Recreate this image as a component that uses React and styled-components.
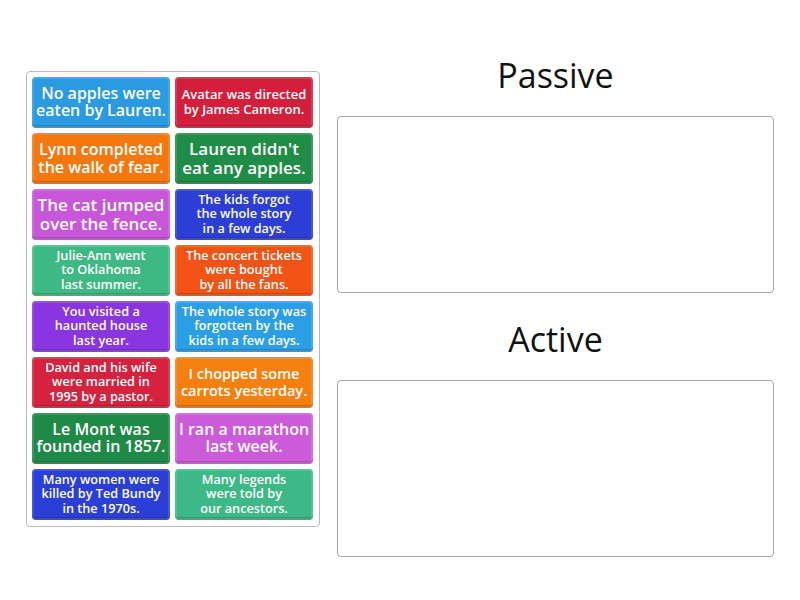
import React from 'react'
import styled, { createGlobalStyle } from 'styled-components'

const GlobalStyle = createGlobalStyle`
  html, body {
    margin: 0;
    padding: 0;
    background: #fff;
  }
  body {
    font-family: "Open Sans", "Liberation Sans", sans-serif;
  }
`

const Page = styled.div`
  display: flex;
  align-items: flex-start;
  width: 800px;
  height: 600px;
  box-sizing: border-box;
  padding: 30px 0 0 26px;
`

const Tray = styled.div`
  margin-top: 41px;
  width: 294px;
  box-sizing: border-box;
  border: 1px solid #b9b9b9;
  border-radius: 4px;
  padding: 5px 6px 6px 5px;
  display: grid;
  grid-template-columns: 138px 138px;
  grid-auto-rows: 51px;
  column-gap: 5px;
  row-gap: 5px;
`

const Card = styled.div`
  display: flex;
  align-items: center;
  justify-content: center;
  background: ${p => p.bg};
  border-radius: 4px;
  box-shadow: inset 0 0 0 2px rgba(255, 255, 255, 0.13),
    inset 0 -3px 0 rgba(0, 0, 0, 0.16);
  color: #fff;
  font-weight: 600;
  font-size: ${p => p.size}px;
  line-height: ${p => p.lh}px;
  text-align: center;
  white-space: nowrap;
  padding-bottom: 2px;
  box-sizing: border-box;
  overflow: hidden;
`

const Zones = styled.div`
  margin-left: 17px;
  width: 437px;
  display: flex;
  flex-direction: column;
`

const ZoneTitle = styled.div`
  font-size: 34px;
  line-height: 46px;
  color: #111;
  text-align: center;
  margin-top: ${p => p.top}px;
  margin-bottom: 18px;
`

const Drop = styled.div`
  height: 177px;
  box-sizing: border-box;
  border: 1px solid #a8a8a8;
  border-radius: 4px;
  background: #fff;
`

const cards = [
  { bg: '#2a9be2', size: 16, lh: 17, lines: ['No apples were', 'eaten by Lauren.'] },
  { bg: '#d41f3c', size: 13, lh: 15, lines: ['Avatar was directed', 'by James Cameron.'] },
  { bg: '#f5780f', size: 16, lh: 18, lines: ['Lynn completed', 'the walk of fear.'] },
  { bg: '#1f8c48', size: 17, lh: 19, lines: ["Lauren didn't", 'eat any apples.'] },
  { bg: '#c756d8', size: 17, lh: 19, lines: ['The cat jumped', 'over the fence.'] },
  { bg: '#2c3ed6', size: 12.7, lh: 14.5, lines: ['The kids forgot', 'the whole story', 'in a few days.'] },
  { bg: '#3eb984', size: 12.7, lh: 14.5, lines: ['Julie-Ann went', 'to Oklahoma', 'last summer.'] },
  { bg: '#f35314', size: 12.7, lh: 14.5, lines: ['The concert tickets', 'were bought', 'by all the fans.'] },
  { bg: '#8a35e2', size: 12.7, lh: 14.5, lines: ['You visited a', 'haunted house', 'last year.'] },
  { bg: '#2a9fe6', size: 12.7, lh: 14.5, lines: ['The whole story was', 'forgotten by the', 'kids in a few days.'] },
  { bg: '#d6223f', size: 12.7, lh: 14.5, lines: ['David and his wife', 'were married in', '1995 by a pastor.'] },
  { bg: '#f5800f', size: 14.5, lh: 17, lines: ['I chopped some', 'carrots yesterday.'] },
  { bg: '#1f8a48', size: 16, lh: 17, lines: ['Le Mont was', 'founded in 1857.'] },
  { bg: '#cc5bd9', size: 16, lh: 17, lines: ['I ran a marathon', 'last week.'] },
  { bg: '#2b3ed8', size: 12.7, lh: 14.5, lines: ['Many women were', 'killed by Ted Bundy', 'in the 1970s.'] },
  { bg: '#3cb986', size: 12.7, lh: 14.5, lines: ['Many legends', 'were told by', 'our ancestors.'] }
]

function App() {
  return (
    <>
      <GlobalStyle />
      <Page>
        <Tray>
          {cards.map((card, index) => (
            <Card key={index} bg={card.bg} size={card.size} lh={card.lh}>
              <span>
                {card.lines.map((line, i) => (
                  <React.Fragment key={i}>
                    {i > 0 && <br />}
                    {line}
                  </React.Fragment>
                ))}
              </span>
            </Card>
          ))}
        </Tray>
        <Zones>
          <ZoneTitle top={22}>Passive</ZoneTitle>
          <Drop />
          <ZoneTitle top={23}>Active</ZoneTitle>
          <Drop />
        </Zones>
      </Page>
    </>
  )
}

export default App
